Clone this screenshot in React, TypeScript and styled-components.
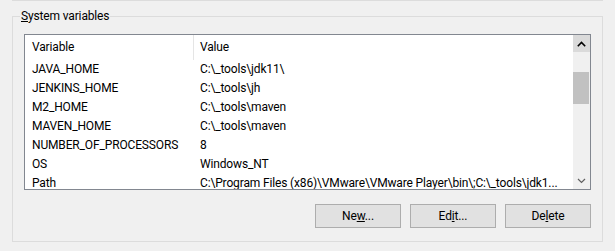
import React from "react";
import styled, { createGlobalStyle } from "styled-components";

const Global = createGlobalStyle`
  html, body { margin: 0; padding: 0; background: #f0f0f0; }
  body {
    font-family: Roboto, "Noto Sans", sans-serif;
    font-size: 12px;
    letter-spacing: -0.15px;
    color: #000;
  }
`;

const Window = styled.div`
  width: 615px;
  height: 251px;
  overflow: hidden;
  box-sizing: border-box;
  padding-left: 12px;
  background: #f0f0f0;
`;

const PrevGroupEdge = styled.div`
  width: 591px;
  height: 1px;
  background: #dcdcdc;
`;

const GroupBox = styled.section`
  position: relative;
  margin-top: 15px;
  width: 591px;
  box-sizing: border-box;
  border: 1px solid #dcdcdc;
  padding: 17px 11px 13px;
  display: flex;
  flex-direction: column;
  gap: 14px;
`;

const Caption = styled.div`
  position: absolute;
  top: -9px;
  left: 7px;
  padding: 0 1px;
  line-height: 16px;
  background: #f0f0f0;
`;

const ListBox = styled.div`
  height: 156px;
  box-sizing: border-box;
  border: 1px solid #828790;
  background: #fff;
  display: flex;
`;

const Table = styled.div`
  flex: 1;
  min-width: 0;
  overflow: hidden;
`;

const HeaderRow = styled.div`
  display: grid;
  grid-template-columns: 169px 1fr;
  height: 24px;
  line-height: 25px;
`;

const HeaderCell = styled.div<{ $first?: boolean }>`
  padding-left: ${(p) => (p.$first ? "7px" : "6px")};
  border-right: ${(p) => (p.$first ? "1px solid #e5e5e5" : "none")};
  box-sizing: border-box;
  white-space: nowrap;
`;

const Row = styled.div`
  display: grid;
  grid-template-columns: 169px 1fr;
  height: 19px;
  line-height: 20px;
`;

const Cell = styled.div<{ $first?: boolean }>`
  padding-left: ${(p) => (p.$first ? "7px" : "6px")};
  padding-right: 2px;
  white-space: nowrap;
  overflow: hidden;
  text-overflow: ellipsis;
`;

const ScrollBar = styled.div`
  width: 17px;
  flex: none;
  background: #f0f0f0;
  display: flex;
  flex-direction: column;
`;

const ArrowButton = styled.div<{ $hot?: boolean }>`
  height: 17px;
  flex: none;
  display: flex;
  align-items: center;
  justify-content: center;
  background: ${(p) => (p.$hot ? "#dadada" : "transparent")};
`;

const Track = styled.div`
  flex: 1;
  display: flex;
  flex-direction: column;
`;

const Thumb = styled.div`
  margin: 20px 1px 0 0;
  height: 32px;
  background: #c1c1c1;
`;

const ButtonRow = styled.div`
  display: flex;
  justify-content: flex-end;
  gap: 9px;
`;

const Button = styled.button`
  width: 86px;
  height: 24px;
  padding: 0;
  border: 1px solid #adadad;
  background: #e1e1e1;
  font: inherit;
  letter-spacing: inherit;
  color: #000;
  line-height: 20px;
`;

const rows: [string, string][] = [
  ["JAVA_HOME", "C:\\_tools\\jdk11\\"],
  ["JENKINS_HOME", "C:\\_tools\\jh"],
  ["M2_HOME", "C:\\_tools\\maven"],
  ["MAVEN_HOME", "C:\\_tools\\maven"],
  ["NUMBER_OF_PROCESSORS", "8"],
  ["OS", "Windows_NT"],
  ["Path", "C:\\Program Files (x86)\\VMware\\VMware Player\\bin\\;C:\\_tools\\jdk1..."],
];

export default function App() {
  return (
    <>
      <Global />
      <Window>
        <PrevGroupEdge />
        <GroupBox>
          <Caption>
            <u>S</u>ystem variables
          </Caption>
          <ListBox>
            <Table>
              <HeaderRow>
                <HeaderCell $first>Variable</HeaderCell>
                <HeaderCell>Value</HeaderCell>
              </HeaderRow>
              {rows.map(([k, v]) => (
                <Row key={k}>
                  <Cell $first>{k}</Cell>
                  <Cell>{v}</Cell>
                </Row>
              ))}
            </Table>
            <ScrollBar>
              <ArrowButton $hot>
                <svg width="9" height="6" viewBox="0 0 9 6">
                  <polyline points="0.8,5.2 4.5,1.5 8.2,5.2" fill="none" stroke="#000" strokeWidth="1.6" />
                </svg>
              </ArrowButton>
              <Track>
                <Thumb />
              </Track>
              <ArrowButton>
                <svg width="9" height="6" viewBox="0 0 9 6">
                  <polyline points="1,1 4.5,4.5 8,1" fill="none" stroke="#606060" strokeWidth="1.2" />
                </svg>
              </ArrowButton>
            </ScrollBar>
          </ListBox>
          <ButtonRow>
            <Button>
              Ne<u>w</u>...
            </Button>
            <Button>
              Ed<u>i</u>t...
            </Button>
            <Button>
              De<u>l</u>ete
            </Button>
          </ButtonRow>
        </GroupBox>
      </Window>
    </>
  );
}
